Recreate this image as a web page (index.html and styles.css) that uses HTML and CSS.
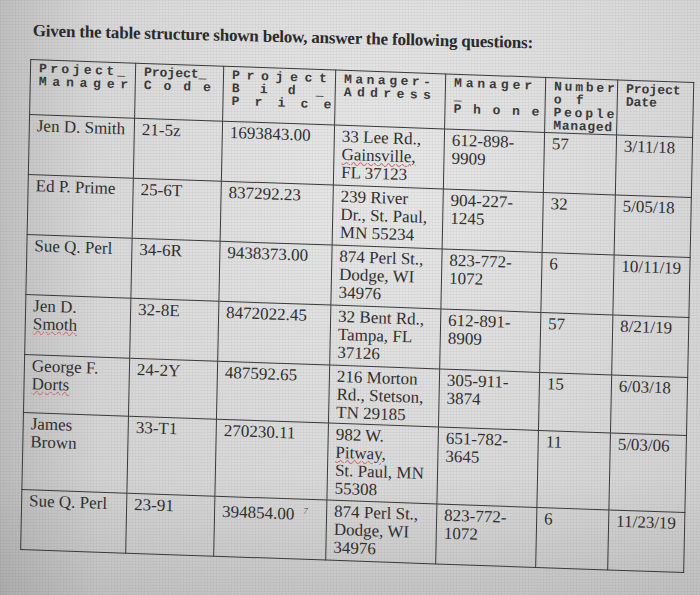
FILE: index.html
```html
<!DOCTYPE html>
<html lang="en">
<head>
<meta charset="utf-8">
<title>Table structure</title>
<link rel="stylesheet" href="styles.css">
</head>
<body>
<div class="sheet">
  <p class="prompt">Given the table structure shown below, answer the following questions:</p>
  <table class="grid">
    <colgroup>
      <col class="c-mgr"><col class="c-code"><col class="c-bid"><col class="c-addr"><col class="c-phone"><col class="c-num"><col class="c-date">
    </colgroup>
    <thead>
      <tr class="r-head">
        <th class="th-a"><span class="hl ls-34">Project_</span><span class="hl ls-58">Manager</span></th>
        <th class="th-b"><span class="hl">Project_</span><span class="hl ls-120">Code</span></th>
        <th class="th-a"><span class="hl ls-67">Project</span><span class="hl ls-202">Bid_</span><span class="hl ls-152">Price</span></th>
        <th class="th-a"><span class="hl ls-35">Manager-</span><span class="hl ls-54">Address</span></th>
        <th class="th-c"><span class="hl ls-39">Manager</span><span class="hl">_</span><span class="hl ls-117">Phone</span></th>
        <th class="th-d"><span class="hl ls-28">Number</span><span class="hl ls-142">of</span><span class="hl ls-28">People</span><span class="hl ls-07">Managed</span></th>
        <th class="th-d"><span class="hl">Project</span><span class="hl">Date</span></th>
      </tr>
    </thead>
    <tbody>
      <tr class="r-a">
        <td>Jen D. Smith</td><td>21-5z</td><td>1693843.00</td>
        <td>33 Lee Rd.,<br><span class="typo">Gainsville,</span><br>FL 37123</td>
        <td>612-898-<br>9909</td><td>57</td><td>3/11/18</td>
      </tr>
      <tr class="r-a">
        <td>Ed P. Prime</td><td>25-6T</td><td>837292.23</td>
        <td>239 River<br>Dr., St. Paul,<br>MN 55234</td>
        <td>904-227-<br>1245</td><td>32</td><td>5/05/18</td>
      </tr>
      <tr class="r-a">
        <td>Sue Q. Perl</td><td>34-6R</td><td>9438373.00</td>
        <td>874 Perl St.,<br>Dodge, WI<br>34976</td>
        <td>823-772-<br>1072</td><td>6</td><td>10/11/19</td>
      </tr>
      <tr class="r-a">
        <td>Jen D.<br><span class="typo">Smoth</span></td><td>32-8E</td><td>8472022.45</td>
        <td>32 Bent Rd.,<br>Tampa, FL<br>37126</td>
        <td>612-891-<br>8909</td><td>57</td><td>8/21/19</td>
      </tr>
      <tr class="r-c">
        <td>George F.<br><span class="typo">Dorts</span></td><td>24-2Y</td><td>487592.65</td>
        <td>216 Morton<br>Rd., Stetson,<br>TN 29185</td>
        <td>305-911-<br>3874</td><td>15</td><td>6/03/18</td>
      </tr>
      <tr class="r-tall">
        <td>James<br>Brown</td><td>33-T1</td><td>270230.11</td>
        <td>982 W.<br><span class="typo">Pitway,</span><br>St. Paul, MN<br>55308</td>
        <td>651-782-<br>3645</td><td>11</td><td>5/03/06</td>
      </tr>
      <tr class="r-a">
        <td>Sue Q. Perl</td><td>23-91</td><td>394854.00<span class="tick">7</span></td>
        <td>874 Perl St.,<br>Dodge, WI<br>34976</td>
        <td>823-772-<br>1072</td><td>6</td><td>11/23/19</td>
      </tr>
    </tbody>
  </table>
</div>
</body>
</html>
```

FILE: styles.css
```css
html {
  background-color: #d4d4d4;
  background-image:
    repeating-linear-gradient(0deg, rgba(0,0,0,0.035) 0 1px, transparent 1px 3px),
    repeating-linear-gradient(90deg, rgba(0,0,0,0.03) 0 1px, transparent 1px 3px),
    linear-gradient(90deg, rgba(0,0,0,0.09) 0%, rgba(0,0,0,0) 14%),
    linear-gradient(0deg, rgba(0,0,0,0.07) 0%, rgba(0,0,0,0) 20%),
    radial-gradient(ellipse at 55% 30%, #e8e8e8 0%, #dcdcdc 45%, #cbcbcb 100%);
}

body {
  margin: 0;
  min-height: 595px;
  overflow: hidden;
}

.sheet {
  margin: 21px 0 0 31px;
  width: 670px;
  transform-origin: 0 0;
  transform: matrix(1, 0.0347, -0.0205, 1, 0, 0);
}

.prompt {
  margin: 0 0 18px 2px;
  font-family: "Liberation Serif", "Times New Roman", serif;
  font-weight: bold;
  font-size: 17px;
  line-height: 20px;
  letter-spacing: -0.2px;
  color: #2a2a2a;
  white-space: nowrap;
  transform-origin: 0 50%;
  transform: rotate(-0.6deg);
}

.grid {
  width: 663px;
  table-layout: fixed;
  border-collapse: collapse;
  border: 1.5px solid #3a3a3a;
}

.c-mgr { width: 105px; }
.c-code { width: 88px; }
.c-bid { width: 112px; }
.c-addr { width: 110px; }
.c-phone { width: 100px; }
.c-num { width: 72px; }
.c-date { width: 76px; }

.grid th,
.grid td {
  border: 1.5px solid #3a3a3a;
  vertical-align: top;
  text-align: left;
}

.grid th {
  padding: 2px 2px 0 8px;
  font-family: "Liberation Mono", "Courier New", monospace;
  font-weight: bold;
  font-size: 13px;
  line-height: 13px;
  color: #3a3a3a;
}

.th-b { padding-left: 10px; }
.th-c { padding-left: 6px; }
.th-d { padding-left: 3px; line-height: 12.25px; }

.hl {
  display: block;
  white-space: pre;
}

.ls-07 { letter-spacing: 0.7px; }
.ls-28 { letter-spacing: 2.8px; }
.ls-34 { letter-spacing: 3.4px; }
.ls-35 { letter-spacing: 3.5px; }
.ls-39 { letter-spacing: 3.9px; }
.ls-54 { letter-spacing: 5.4px; }
.ls-58 { letter-spacing: 5.8px; }
.ls-67 { letter-spacing: 6.7px; }
.ls-117 { letter-spacing: 11.7px; }
.ls-120 { letter-spacing: 12px; }
.ls-142 { letter-spacing: 14.2px; }
.ls-152 { letter-spacing: 15.2px; }
.ls-202 { letter-spacing: 20.2px; }

.grid td {
  padding: 2px 2px 0 7px;
  font-family: "Liberation Serif", "Times New Roman", serif;
  font-size: 17px;
  line-height: 18px;
  color: #303030;
  white-space: nowrap;
}

.r-head { height: 53px; }
.r-a { height: 60px; }
.r-c { height: 58px; }
.r-tall { height: 77px; }

.typo {
  text-decoration: underline wavy #d07a7a;
  text-decoration-thickness: 1px;
  text-underline-offset: 1px;
}

.tick {
  margin-left: 9px;
  font-size: 9px;
  font-style: italic;
  vertical-align: 6px;
  color: #555;
}
```
